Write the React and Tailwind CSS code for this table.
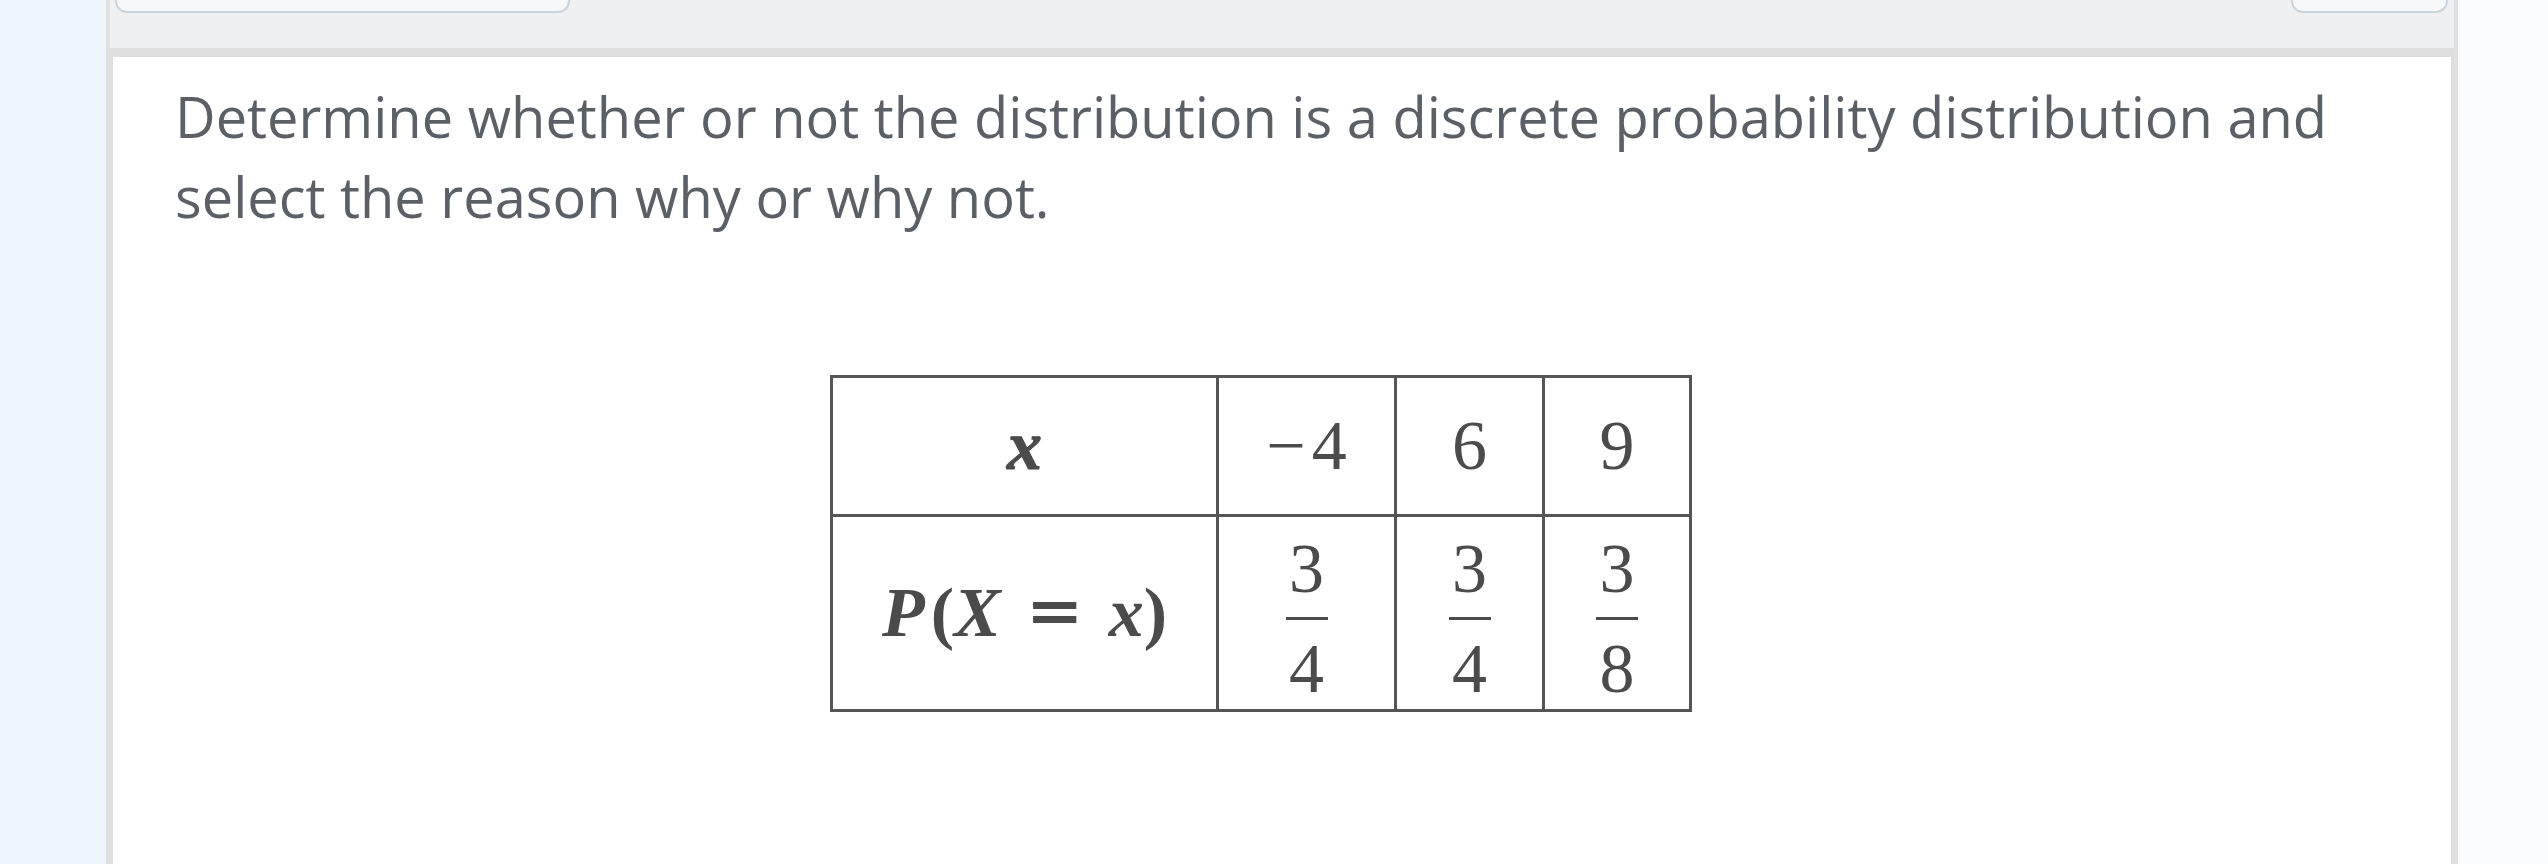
import React from 'react'

const serif = "font-['Liberation_Serif','Times_New_Roman',serif] text-[70px] leading-none text-[#4b4b4b]"

function Fraction({ top, bottom }) {
  return (
    <div className="flex flex-col items-center pt-[12px]">
      <span>{top}</span>
      <span className="mt-[13px] mb-[14px] h-[3px] w-[42px] bg-[#4b4b4b]" />
      <span>{bottom}</span>
    </div>
  )
}

export default function App() {
  const values = [
    <>
      <span>{'\u2212'}</span>
      <span className="ml-[6px]">4</span>
    </>,
    '6',
    '9',
  ]
  const probs = [
    ['3', '4'],
    ['3', '4'],
    ['3', '8'],
  ]

  return (
    <div className="flex h-[864px] w-full overflow-hidden bg-[#fbfcfe]">
      {/* left rail */}
      <aside className="w-[106px] shrink-0 bg-[#eff5fd]" />

      <main className="flex w-[2352px] shrink-0 flex-col border-x-4 border-[#e1e1e1]">
        {/* toolbar, scrolled mostly out of view */}
        <div className="flex h-[48px] shrink-0 justify-between bg-[#eff0f2] pl-[5px] pr-[6px]">
          <div className="h-[13px] w-[455px] rounded-b-[12px] border-2 border-t-0 border-[#c9d5dd] bg-[#f6f8fa]" />
          <div className="h-[13px] w-[157px] rounded-b-[12px] border-2 border-t-0 border-[#c9d5dd] bg-[#f6f8fa]" />
        </div>

        {/* question card */}
        <section className="flex-1 border-x-[3px] border-t-[9px] border-[#dfdfdf] bg-white pl-[62px] pr-[56px] pt-[19px]">
          <p className="font-['Open_Sans',sans-serif] text-[56px] leading-[80px] text-[#5b6067]">
            Determine whether or not the distribution is a discrete probability distribution and select the reason why or why not.
          </p>

          <div className={`mt-[139px] ml-[655px] grid w-fit grid-cols-[383px_175px_145px_144px] grid-rows-[136px_192px] gap-[3px] bg-[#555555] p-[3px] ${serif}`}>
            <div className="flex items-center justify-center bg-white">
              <span className="font-bold italic [-webkit-text-stroke:1px_#4b4b4b]">x</span>
            </div>
            {values.map((v, i) => (
              <div key={i} className="flex items-center justify-center bg-white">
                {v}
              </div>
            ))}

            <div className="flex items-center justify-center bg-white font-bold">
              <span className="italic">P</span>
              <span className="ml-[6px]">(</span>
              <span className="italic">X</span>
              <span className="mx-[34px] scale-x-125 [-webkit-text-stroke:2px_#4b4b4b]">=</span>
              <span className="italic">x</span>
              <span>)</span>
            </div>
            {probs.map(([t, b], i) => (
              <div key={i} className="flex items-center justify-center bg-white">
                <Fraction top={t} bottom={b} />
              </div>
            ))}
          </div>
        </section>
      </main>
    </div>
  )
}
